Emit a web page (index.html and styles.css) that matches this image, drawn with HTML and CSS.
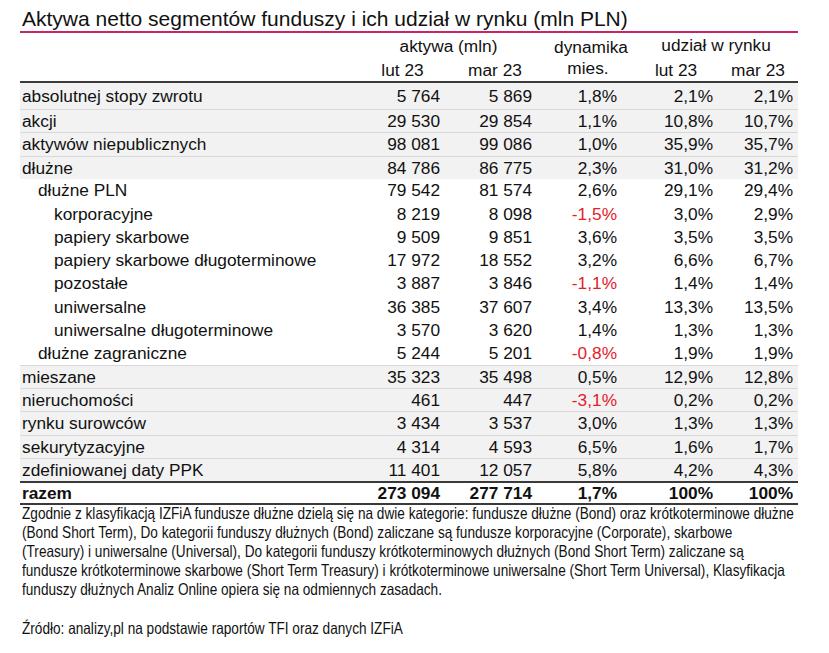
FILE: index.html
```html
<!DOCTYPE html>
<html lang="pl">
<head>
<meta charset="utf-8">
<title>Aktywa netto segmentów funduszy</title>
<link rel="stylesheet" href="styles.css">
</head>
<body>
<div class="page">
  <h1 class="title">Aktywa netto segmentów funduszy i ich udział w rynku (mln PLN)</h1>
  <table class="data">
    <colgroup>
      <col class="c-label"><col class="c-a1"><col class="c-a2"><col class="c-dyn"><col class="c-u1"><col class="c-u2">
    </colgroup>
    <thead>
      <tr class="h1">
        <th rowspan="2" class="h-empty"></th>
        <th colspan="2" class="h-akt">aktywa (mln)</th>
        <th rowspan="2" class="h-dyn">dynamika<br>mies.</th>
        <th colspan="2" class="h-udz">udział w rynku</th>
      </tr>
      <tr class="h2">
        <th class="h-l1">lut 23</th>
        <th class="h-m1">mar 23</th>
        <th class="h-l2">lut 23</th>
        <th class="h-m2">mar 23</th>
      </tr>
    </thead>
    <tbody>
      <tr class="g first"><td>absolutnej stopy zwrotu</td><td>5 764</td><td>5 869</td><td>1,8%</td><td>2,1%</td><td>2,1%</td></tr>
      <tr class="g"><td>akcji</td><td>29 530</td><td>29 854</td><td>1,1%</td><td>10,8%</td><td>10,7%</td></tr>
      <tr class="g"><td>aktywów niepublicznych</td><td>98 081</td><td>99 086</td><td>1,0%</td><td>35,9%</td><td>35,7%</td></tr>
      <tr class="g"><td>dłużne</td><td>84 786</td><td>86 775</td><td>2,3%</td><td>31,0%</td><td>31,2%</td></tr>
      <tr class="w"><td class="l2">dłużne PLN</td><td>79 542</td><td>81 574</td><td>2,6%</td><td>29,1%</td><td>29,4%</td></tr>
      <tr class="w"><td class="l3">korporacyjne</td><td>8 219</td><td>8 098</td><td class="neg">-1,5%</td><td>3,0%</td><td>2,9%</td></tr>
      <tr class="w"><td class="l3">papiery skarbowe</td><td>9 509</td><td>9 851</td><td>3,6%</td><td>3,5%</td><td>3,5%</td></tr>
      <tr class="w"><td class="l3">papiery skarbowe długoterminowe</td><td>17 972</td><td>18 552</td><td>3,2%</td><td>6,6%</td><td>6,7%</td></tr>
      <tr class="w"><td class="l3">pozostałe</td><td>3 887</td><td>3 846</td><td class="neg">-1,1%</td><td>1,4%</td><td>1,4%</td></tr>
      <tr class="w"><td class="l3">uniwersalne</td><td>36 385</td><td>37 607</td><td>3,4%</td><td>13,3%</td><td>13,5%</td></tr>
      <tr class="w"><td class="l3">uniwersalne długoterminowe</td><td>3 570</td><td>3 620</td><td>1,4%</td><td>1,3%</td><td>1,3%</td></tr>
      <tr class="w"><td class="l2">dłużne zagraniczne</td><td>5 244</td><td>5 201</td><td class="neg">-0,8%</td><td>1,9%</td><td>1,9%</td></tr>
      <tr class="g"><td>mieszane</td><td>35 323</td><td>35 498</td><td>0,5%</td><td>12,9%</td><td>12,8%</td></tr>
      <tr class="g"><td>nieruchomości</td><td>461</td><td>447</td><td class="neg">-3,1%</td><td>0,2%</td><td>0,2%</td></tr>
      <tr class="g"><td>rynku surowców</td><td>3 434</td><td>3 537</td><td>3,0%</td><td>1,3%</td><td>1,3%</td></tr>
      <tr class="g"><td>sekurytyzacyjne</td><td>4 314</td><td>4 593</td><td>6,5%</td><td>1,6%</td><td>1,7%</td></tr>
      <tr class="g"><td>zdefiniowanej daty PPK</td><td>11 401</td><td>12 057</td><td>5,8%</td><td>4,2%</td><td>4,3%</td></tr>
      <tr class="total"><td>razem</td><td>273 094</td><td>277 714</td><td>1,7%</td><td>100%</td><td>100%</td></tr>
    </tbody>
  </table>
  <div class="notes">
    <p class="note">Zgodnie z klasyfikacją IZFiA fundusze dłużne dzielą się na dwie kategorie: fundusze dłużne (Bond) oraz krótkoterminowe dłużne<br>(Bond Short Term), Do kategorii funduszy dłużnych (Bond) zaliczane są fundusze korporacyjne (Corporate), skarbowe<br>(Treasury) i uniwersalne (Universal), Do kategorii funduszy krótkoterminowych dłużnych (Bond Short Term) zaliczane są<br>fundusze krótkoterminowe skarbowe (Short Term Treasury) i krótkoterminowe uniwersalne (Short Term Universal), Klasyfikacja<br>funduszy dłużnych Analiz Online opiera się na odmiennych zasadach.</p>
    <p class="source">Źródło: analizy,pl na podstawie raportów TFI oraz danych IZFiA</p>
  </div>
</div>
</body>
</html>
```
FILE: styles.css
```css
html, body {
  margin: 0;
  padding: 0;
  background: #ffffff;
  overflow: hidden;
}
body {
  font-family: "Liberation Sans", Arial, sans-serif;
  color: #111111;
}
.page {
  width: 778px;
  padding: 7px 31px 0 20px;
}
.title {
  margin: 0;
  padding: 0 0 0 2px;
  height: 24px;
  font-size: 21px;
  font-weight: normal;
  line-height: 24px;
  color: #111111;
  border-bottom: 2px solid #c8246c;
}
.data {
  width: 778px;
  border-collapse: collapse;
  table-layout: fixed;
  font-size: 17.3px;
}
.c-label { width: 340px; }
.c-a1 { width: 85px; }
.c-a2 { width: 92px; }
.c-dyn { width: 85px; }
.c-u1 { width: 96px; }
.c-u2 { width: 80px; }

.data th {
  font-weight: normal;
  padding: 0;
  text-align: center;
  vertical-align: middle;
  line-height: 21px;
  color: #111111;
}
.data .h1 th { height: 25px; }
.data .h2 th { height: 21px; }
.data .h2 th,
.data .h-dyn,
.data .h-empty { border-bottom: 2px solid #3a3a3a; }
.data .h-akt { padding-bottom: 1px; }
.data .h-udz { padding-left: 12px; padding-bottom: 2px; }
.data .h-dyn { padding-left: 17px; padding-top: 1px; }
.data .h-m1 { padding-left: 8px; }
.data .h-l2 { padding-left: 12px; }

.data td {
  padding: 0 5px 0 0;
  height: 23.25px;
  text-align: right;
  vertical-align: middle;
  line-height: 20px;
  white-space: nowrap;
}
.data td:first-child {
  text-align: left;
  padding-left: 2px;
}
.data td.l2 { padding-left: 18px; }
.data td.l3 { padding-left: 34px; }

.data .g td {
  background: #f2f2f2;
  border-top: 1px solid #d9d9d9;
  height: 22.25px;
}
.data .g.first td {
  height: 26px;
  border-top: none;
}
.data .w td {
  background: #ffffff;
}
.data td.neg { color: #e4202a; }

.data .total td {
  font-weight: bold;
  height: 20px;
  border-top: 2px solid #3a3a3a;
  border-bottom: 2px solid #3a3a3a;
  background: #ffffff;
}

.notes {
  padding: 0 0 0 2px;
  margin-top: -1px;
}
.note,
.source {
  margin: 0;
  font-family: "Liberation Sans", Arial, sans-serif;
  font-size: 16.5px;
  line-height: 19px;
  color: #111111;
  white-space: nowrap;
  transform: scaleX(0.825);
  transform-origin: 0 0;
}
.source {
  margin-top: 20px;
}
```
